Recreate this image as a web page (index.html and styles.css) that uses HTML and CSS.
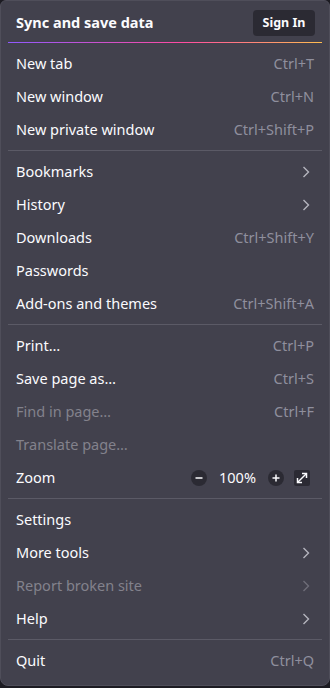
FILE: index.html
```html
<!DOCTYPE html>
<html lang="en">

<head>
    <meta charset="UTF-8">
    <meta name="viewport" content="width=device-width, initial-scale=1.0">
    <title>App menu</title>
    <link rel="stylesheet" href="styles.css">
</head>

<body>
    <div class="panel">
        <div class="sync-row">
            <span class="sync-title">Sync and save data</span>
            <button type="button" class="sign-in">Sign In</button>
        </div>
        <div class="gradient-line"></div>

        <ul class="menu">
            <li class="item"><span>New tab</span><span class="key">Ctrl+T</span></li>
            <li class="item"><span>New window</span><span class="key">Ctrl+N</span></li>
            <li class="item"><span>New private window</span><span class="key">Ctrl+Shift+P</span></li>
        </ul>
        <div class="separator"></div>

        <ul class="menu">
            <li class="item"><span>Bookmarks</span>
                <svg class="chevron" width="8" height="12" viewBox="0 0 8 12"><polyline points="1.5,1 6.5,6 1.5,11" /></svg>
            </li>
            <li class="item"><span>History</span>
                <svg class="chevron" width="8" height="12" viewBox="0 0 8 12"><polyline points="1.5,1 6.5,6 1.5,11" /></svg>
            </li>
            <li class="item"><span>Downloads</span><span class="key">Ctrl+Shift+Y</span></li>
            <li class="item"><span>Passwords</span></li>
            <li class="item"><span>Add-ons and themes</span><span class="key">Ctrl+Shift+A</span></li>
        </ul>
        <div class="separator"></div>

        <ul class="menu">
            <li class="item"><span>Print…</span><span class="key">Ctrl+P</span></li>
            <li class="item"><span>Save page as…</span><span class="key">Ctrl+S</span></li>
            <li class="item disabled"><span>Find in page…</span><span class="key">Ctrl+F</span></li>
            <li class="item disabled"><span>Translate page…</span></li>
            <li class="item"><span>Zoom</span>
                <div class="zoom-controls">
                    <span class="round-btn">
                        <svg width="16" height="16" viewBox="0 0 16 16"><line x1="4.5" y1="8" x2="11.5" y2="8" /></svg>
                    </span>
                    <span class="zoom-value">100%</span>
                    <span class="round-btn">
                        <svg width="16" height="16" viewBox="0 0 16 16"><line x1="4.5" y1="8" x2="11.5" y2="8" /><line x1="8" y1="4.5" x2="8" y2="11.5" /></svg>
                    </span>
                    <span class="full-btn">
                        <svg width="16" height="16" viewBox="0 0 16 16">
                            <line x1="4" y1="12" x2="12" y2="4" />
                            <polyline points="8,3.5 12.5,3.5 12.5,8" />
                            <polyline points="3.5,8 3.5,12.5 8,12.5" />
                        </svg>
                    </span>
                </div>
            </li>
        </ul>
        <div class="separator"></div>

        <ul class="menu">
            <li class="item"><span>Settings</span></li>
            <li class="item"><span>More tools</span>
                <svg class="chevron" width="8" height="12" viewBox="0 0 8 12"><polyline points="1.5,1 6.5,6 1.5,11" /></svg>
            </li>
            <li class="item disabled"><span>Report broken site</span>
                <svg class="chevron" width="8" height="12" viewBox="0 0 8 12"><polyline points="1.5,1 6.5,6 1.5,11" /></svg>
            </li>
            <li class="item"><span>Help</span>
                <svg class="chevron" width="8" height="12" viewBox="0 0 8 12"><polyline points="1.5,1 6.5,6 1.5,11" /></svg>
            </li>
        </ul>
        <div class="separator"></div>

        <ul class="menu">
            <li class="item"><span>Quit</span><span class="key">Ctrl+Q</span></li>
        </ul>
    </div>
</body>

</html>
```

FILE: styles.css
```css
body {
    font-family: 'Noto Sans', 'Open Sans', sans-serif;
    margin: 0;
    padding: 0;
    background-color: #1c1b22;
    color: #fbfbfe;
}

.panel {
    width: 330px;
    box-sizing: border-box;
    background-color: #42414d;
    border: 1px solid #4f4e5a;
    border-radius: 6px 6px 8px 8px;
    padding: 4px 7px 8px 7px;
}

.sync-row {
    height: 37px;
    box-sizing: border-box;
    display: flex;
    align-items: center;
    justify-content: space-between;
    padding: 0 8px 1px 8px;
}

.sync-title {
    font-weight: bold;
    font-size: 14.5px;
    padding-bottom: 2px;
}

.sign-in {
    background-color: #2b2a33;
    color: #fbfbfe;
    border: none;
    border-radius: 4px;
    height: 26px;
    width: 62px;
    margin-right: -1px;
    font-family: inherit;
    font-weight: bold;
    font-size: 12.5px;
    padding: 0 0 1px 0;
}

.gradient-line {
    height: 1px;
    background: linear-gradient(90deg, #9059ff, #ff4aa2 55%, #ffbd4f);
    margin-bottom: 4px;
}

.menu {
    list-style: none;
    margin: 0;
    padding: 0;
}

.item {
    height: 33px;
    box-sizing: border-box;
    display: flex;
    align-items: center;
    justify-content: space-between;
    padding: 0 8px 2px 8px;
    font-size: 14.5px;
}

.item .key {
    color: #8f8f9d;
}

.item.disabled {
    color: #83828c;
}

.chevron {
    margin-right: 4px;
    margin-top: 2px;
}

.chevron polyline {
    fill: none;
    stroke: #b4b4be;
    stroke-width: 1.4;
}

.item.disabled .chevron polyline {
    stroke: #6e6d78;
}

.separator {
    height: 1px;
    background-color: #5b5a66;
    margin: 4px 0;
}

.zoom-controls {
    display: flex;
    align-items: center;
    margin-right: 4px;
    margin-top: 2px;
}

.round-btn {
    width: 16px;
    height: 16px;
    border-radius: 50%;
    background-color: #2b2a33;
    display: flex;
}

.round-btn line,
.full-btn line,
.full-btn polyline {
    stroke: #fbfbfe;
    stroke-width: 1.5;
    fill: none;
}

.zoom-value {
    width: 61px;
    text-align: center;
    font-size: 14.5px;
    padding-bottom: 2px;
}

.full-btn {
    width: 16px;
    height: 16px;
    margin-left: 10px;
    background-color: #2b2a33;
    border-radius: 2px;
    display: flex;
}
```
